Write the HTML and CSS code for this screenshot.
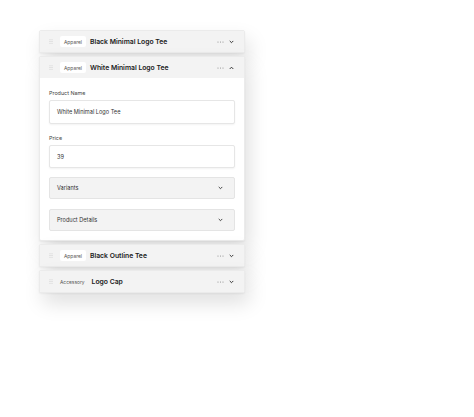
FILE: index.html
```html
<!DOCTYPE html>
<html>
<head>
<meta charset="utf-8">
<link rel="stylesheet" href="styles.css">
</head>
<body>
<div class="stack">
  <div class="card">
    <div class="head">
      <span class="grip"><svg width="4" height="5" viewBox="0 0 4 5"><g fill="#c8c8c8"><circle cx="1" cy="0.8" r="0.5"/><circle cx="3" cy="0.8" r="0.5"/><circle cx="1" cy="2.5" r="0.5"/><circle cx="3" cy="2.5" r="0.5"/><circle cx="1" cy="4.2" r="0.5"/><circle cx="3" cy="4.2" r="0.5"/></g></svg></span>
      <span class="pill">Apparel</span>
      <span class="title">Black Minimal Logo Tee</span>
      <span class="actions">
        <svg class="dots" width="7" height="2" viewBox="0 0 7 2"><g fill="#8a8a8a"><circle cx="1" cy="1" r="0.6"/><circle cx="3.5" cy="1" r="0.6"/><circle cx="6" cy="1" r="0.6"/></g></svg>
        <svg class="chev" width="5" height="4" viewBox="0 0 5 4"><path d="M1 1.2 L2.5 2.7 L4 1.2" fill="none" stroke="#222" stroke-width="0.9" stroke-linecap="round" stroke-linejoin="round"/></svg>
      </span>
    </div>
  </div>

  <div class="card">
    <div class="head">
      <span class="grip"><svg width="4" height="5" viewBox="0 0 4 5"><g fill="#c8c8c8"><circle cx="1" cy="0.8" r="0.5"/><circle cx="3" cy="0.8" r="0.5"/><circle cx="1" cy="2.5" r="0.5"/><circle cx="3" cy="2.5" r="0.5"/><circle cx="1" cy="4.2" r="0.5"/><circle cx="3" cy="4.2" r="0.5"/></g></svg></span>
      <span class="pill">Apparel</span>
      <span class="title">White Minimal Logo Tee</span>
      <span class="actions">
        <svg class="dots" width="7" height="2" viewBox="0 0 7 2"><g fill="#8a8a8a"><circle cx="1" cy="1" r="0.6"/><circle cx="3.5" cy="1" r="0.6"/><circle cx="6" cy="1" r="0.6"/></g></svg>
        <svg class="chev" width="5" height="4" viewBox="0 0 5 4"><path d="M1 2.7 L2.5 1.2 L4 2.7" fill="none" stroke="#222" stroke-width="0.9" stroke-linecap="round" stroke-linejoin="round"/></svg>
      </span>
    </div>
    <div class="body">
      <div class="field">
        <div class="label">Product Name</div>
        <div class="input">White Minimal Logo Tee</div>
      </div>
      <div class="field field-price">
        <div class="label">Price</div>
        <div class="input input-short">39</div>
      </div>
      <div class="section">
        <span>Variants</span>
        <svg class="chev" width="5" height="4" viewBox="0 0 5 4"><path d="M1 1.2 L2.5 2.7 L4 1.2" fill="none" stroke="#333" stroke-width="0.9" stroke-linecap="round" stroke-linejoin="round"/></svg>
      </div>
      <div class="section">
        <span>Product Details</span>
        <svg class="chev" width="5" height="4" viewBox="0 0 5 4"><path d="M1 1.2 L2.5 2.7 L4 1.2" fill="none" stroke="#333" stroke-width="0.9" stroke-linecap="round" stroke-linejoin="round"/></svg>
      </div>
    </div>
  </div>

  <div class="card">
    <div class="head">
      <span class="grip"><svg width="4" height="5" viewBox="0 0 4 5"><g fill="#c8c8c8"><circle cx="1" cy="0.8" r="0.5"/><circle cx="3" cy="0.8" r="0.5"/><circle cx="1" cy="2.5" r="0.5"/><circle cx="3" cy="2.5" r="0.5"/><circle cx="1" cy="4.2" r="0.5"/><circle cx="3" cy="4.2" r="0.5"/></g></svg></span>
      <span class="pill">Apparel</span>
      <span class="title">Black Outline Tee</span>
      <span class="actions">
        <svg class="dots" width="7" height="2" viewBox="0 0 7 2"><g fill="#8a8a8a"><circle cx="1" cy="1" r="0.6"/><circle cx="3.5" cy="1" r="0.6"/><circle cx="6" cy="1" r="0.6"/></g></svg>
        <svg class="chev" width="5" height="4" viewBox="0 0 5 4"><path d="M1 1.2 L2.5 2.7 L4 1.2" fill="none" stroke="#222" stroke-width="0.9" stroke-linecap="round" stroke-linejoin="round"/></svg>
      </span>
    </div>
  </div>

  <div class="card">
    <div class="head">
      <span class="grip"><svg width="4" height="5" viewBox="0 0 4 5"><g fill="#c8c8c8"><circle cx="1" cy="0.8" r="0.5"/><circle cx="3" cy="0.8" r="0.5"/><circle cx="1" cy="2.5" r="0.5"/><circle cx="3" cy="2.5" r="0.5"/><circle cx="1" cy="4.2" r="0.5"/><circle cx="3" cy="4.2" r="0.5"/></g></svg></span>
      <span class="pill pill-plain">Accessory</span>
      <span class="title">Logo Cap</span>
      <span class="actions">
        <svg class="dots" width="7" height="2" viewBox="0 0 7 2"><g fill="#8a8a8a"><circle cx="1" cy="1" r="0.6"/><circle cx="3.5" cy="1" r="0.6"/><circle cx="6" cy="1" r="0.6"/></g></svg>
        <svg class="chev" width="5" height="4" viewBox="0 0 5 4"><path d="M1 1.2 L2.5 2.7 L4 1.2" fill="none" stroke="#222" stroke-width="0.9" stroke-linecap="round" stroke-linejoin="round"/></svg>
      </span>
    </div>
  </div>
</div>
</body>
</html>
```

FILE: styles.css
```css
html, body {
  margin: 0;
  padding: 0;
  background: #ffffff;
}
body {
  font-family: Inter, "Noto Sans", "Liberation Sans", sans-serif;
  color: #222;
  -webkit-font-smoothing: antialiased;
  min-height: 417px;
}
.stack {
  width: 206px;
  padding: 30px 0 60px 39px;
  display: flex;
  flex-direction: column;
  gap: 3px;
}
.card {
  background: #ffffff;
  border: 1px solid #ebebeb;
  border-radius: 2px;
  box-shadow: 4px 10px 20px rgba(0,0,0,0.13), 0 1px 2px rgba(0,0,0,0.05);
  overflow: hidden;
}
.head {
  height: 21px;
  background: #f3f3f3;
  display: flex;
  align-items: center;
  padding: 0 10px 0 9px;
}
.grip {
  display: flex;
  width: 4px;
  margin-right: 7px;
}
.pill {
  font-size: 4.9px;
  color: #555;
  background: #ffffff;
  border-radius: 2px;
  padding: 0 4px;
  height: 11px;
  display: flex;
  align-items: center;
  margin-right: 4px;
}
.pill-plain {
  background: transparent;
  padding: 0;
  margin-right: 7px;
}
.title {
  font-size: 6.8px;
  font-weight: 600;
  color: #1a1a1a;
  flex: 1;
}
.actions {
  display: flex;
  align-items: center;
  gap: 5px;
}
.body {
  padding: 11px 9px 9px 9px;
  display: flex;
  flex-direction: column;
}
.field {
  display: flex;
  flex-direction: column;
  gap: 3px;
  margin-bottom: 10px;
}
.field-price {
  margin-bottom: 9px;
}
.label {
  font-size: 5.4px;
  font-weight: 400;
  color: #444;
  line-height: 8px;
}
.input {
  height: 22px;
  border: 1px solid #e6e6e6;
  border-radius: 2px;
  background: #fff;
  box-shadow: 0 1px 2px rgba(0,0,0,0.05);
  font-size: 5.6px;
  color: #333;
  display: flex;
  align-items: center;
  padding: 0 7px;
}
.input-short {
  height: 21px;
}
.section {
  height: 20px;
  border: 1px solid #e4e4e4;
  border-radius: 2px;
  background: #f3f3f3;
  font-size: 5.6px;
  color: #333;
  display: flex;
  align-items: center;
  justify-content: space-between;
  padding: 0 11px 0 7px;
  margin-bottom: 10px;
}
.section:last-child {
  margin-bottom: 0;
}
```
